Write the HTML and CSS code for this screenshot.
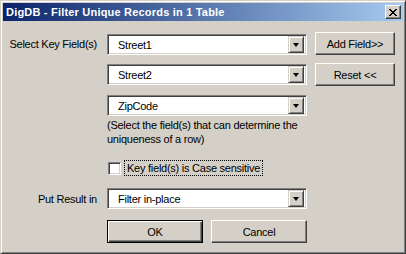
FILE: index.html
```html
<html>
<head>
    <meta charset="UTF-8">
    <title>DigDB - Filter Unique Records in 1 Table</title>
    <link rel="stylesheet" href="styles.css">
</head>
<body>
    <div class="window">
        <div class="titlebar">
            <span class="title">DigDB - Filter Unique Records in 1 Table</span>
            <span class="close-btn">
                <svg width="8" height="7" viewBox="0 0 8 7">
                    <path d="M0 0h2v1h-2zM6 0h2v1h-2zM1 1h2v1h-2zM5 1h2v1h-2zM2 2h4v1h-4zM3 3h2v1h-2zM2 4h4v1h-4zM1 5h2v1h-2zM5 5h2v1h-2zM0 6h2v1h-2zM6 6h2v1h-2z" fill="#000"/>
                </svg>
            </span>
        </div>
        <div class="content">
            <div class="row row-first">
                <div class="label">Select Key Field(s)</div>
                <div class="combo"><span class="combo-text">Street1</span><span class="drop-btn"></span></div>
                <div class="btn">Add Field&gt;&gt;</div>
            </div>
            <div class="row row-second">
                <div></div>
                <div class="combo"><span class="combo-text">Street2</span><span class="drop-btn"></span></div>
                <div class="btn">Reset &lt;&lt;</div>
            </div>
            <div class="row row-third">
                <div></div>
                <div class="combo"><span class="combo-text">ZipCode</span><span class="drop-btn"></span></div>
            </div>
            <div class="row row-help">
                <div></div>
                <div class="help">(Select the field(s) that can determine the<br>uniqueness of a row)</div>
            </div>
            <div class="row row-check">
                <div></div>
                <div class="check-line">
                    <span class="checkbox"></span>
                    <span class="check-label">Key field(s) is Case sensitive</span>
                </div>
            </div>
            <div class="row row-result">
                <div class="label">Put Result in</div>
                <div class="combo"><span class="combo-text">Filter in-place</span><span class="drop-btn"></span></div>
            </div>
            <div class="row row-actions">
                <div></div>
                <div class="actions">
                    <div class="btn btn-default">OK</div>
                    <div class="btn">Cancel</div>
                </div>
            </div>
        </div>
    </div>
</body>
</html>
```

FILE: styles.css
```css
html,
body {
    margin: 0;
    padding: 0;
    background: #D4D0C8;
}

body {
    font-family: 'Liberation Sans', Arial, sans-serif;
    font-size: 11px;
    letter-spacing: -0.25px;
    color: #000;
}

.window {
    box-sizing: border-box;
    width: 406px;
    height: 254px;
    background: #D4D0C8;
    border: 1px solid;
    border-color: #D4D0C8 #404040 #404040 #D4D0C8;
    box-shadow: inset 1px 1px #FFFFFF, inset -1px -1px #808080;
    padding: 2px;
    display: flex;
    flex-direction: column;
}

.titlebar {
    height: 18px;
    display: flex;
    align-items: center;
    justify-content: space-between;
    background: linear-gradient(to right, #0A246A, #A6CAF0);
    padding: 0 2px 0 3px;
}

.title {
    color: #fff;
    font-weight: bold;
    font-size: 11px;
    letter-spacing: 0.2px;
}

.close-btn {
    box-sizing: border-box;
    width: 16px;
    height: 14px;
    display: flex;
    align-items: center;
    justify-content: center;
    background: #D4D0C8;
    border: 1px solid;
    border-color: #FFFFFF #404040 #404040 #FFFFFF;
    box-shadow: inset -1px -1px #808080;
}

.row {
    display: grid;
    grid-template-columns: 96px 200px 80px;
    column-gap: 8px;
    align-items: center;
}

.row-first {
    margin-top: 11px;
}

.row-second {
    margin-top: 8px;
}

.row-third {
    margin-top: 9px;
}

.row-help {
    margin-top: 2px;
}

.row-check {
    margin-top: 13px;
}

.row-result {
    margin-top: 11px;
}

.row-actions {
    margin-top: 11px;
}

.label {
    text-align: right;
    padding-right: 2px;
}

.row-first .combo {
    margin-top: 2px;
    align-self: start;
}

.row-second .combo {
    margin-top: 1px;
    align-self: start;
}

.combo {
    box-sizing: border-box;
    height: 21px;
    background: #fff;
    border: 1px solid;
    border-color: #808080 #FFFFFF #FFFFFF #808080;
    box-shadow: inset 1px 1px #404040, inset -1px -1px #D4D0C8;
    padding: 2px;
    display: flex;
    align-items: center;
}

.combo-text {
    flex: 1;
    padding-left: 8px;
}

.drop-btn {
    box-sizing: border-box;
    width: 16px;
    height: 17px;
    background: #D4D0C8;
    border: 1px solid;
    border-color: #D4D0C8 #404040 #404040 #D4D0C8;
    box-shadow: inset 1px 1px #FFFFFF, inset -1px -1px #808080;
    display: flex;
    align-items: center;
    justify-content: center;
}

.drop-btn::after {
    content: "";
    width: 0;
    height: 0;
    border-left: 3.5px solid transparent;
    border-right: 3.5px solid transparent;
    border-top: 4px solid #000;
    margin-top: 1px;
}

.btn {
    box-sizing: border-box;
    height: 23px;
    background: #D4D0C8;
    border: 1px solid;
    border-color: #FFFFFF #404040 #404040 #FFFFFF;
    box-shadow: inset -1px -1px #808080;
    display: flex;
    align-items: center;
    justify-content: center;
}

.btn-default {
    border-color: #000;
    box-shadow: inset 1px 1px #FFFFFF, inset -1px -1px #404040, inset -2px -2px #808080;
}

.help {
    line-height: 14px;
    grid-column: 2 / span 2;
    white-space: nowrap;
}

.check-line {
    grid-column: 2 / span 2;
    display: flex;
    align-items: center;
    height: 18px;
}

.checkbox {
    box-sizing: border-box;
    width: 13px;
    height: 13px;
    margin-left: 1px;
    background: #fff;
    border: 1px solid;
    border-color: #808080 #FFFFFF #FFFFFF #808080;
    box-shadow: inset 1px 1px #404040, inset -1px -1px #D4D0C8;
}

.check-label {
    margin-left: 3px;
    padding: 1px 2px;
    border: 1px dotted #000;
}

.actions {
    grid-column: 2 / span 2;
    display: flex;
    gap: 8px;
}

.actions .btn {
    width: 96px;
}
```
